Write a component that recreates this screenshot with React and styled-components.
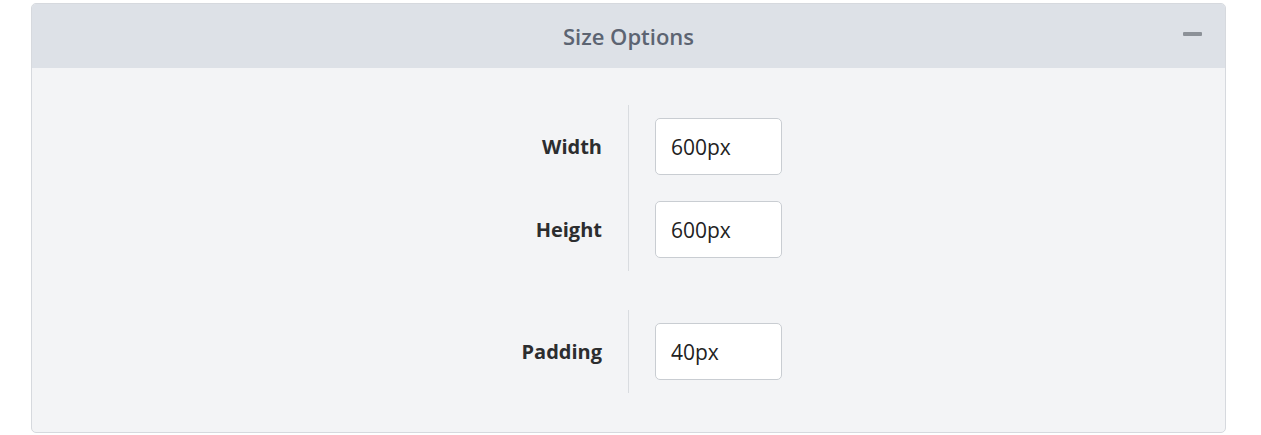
import React from 'react';
import styled, { createGlobalStyle } from 'styled-components';

const GlobalStyle = createGlobalStyle`
    body {
        margin: 0;
        background: #ffffff;
        font-family: "Open Sans", "Liberation Sans", sans-serif;
    }
`;

const Panel = styled.section`
    margin: 3px 0 0 31px;
    width: 1195px;
    box-sizing: border-box;
    border: 1px solid #d6d9de;
    border-radius: 5px;
    background: #f3f4f6;
    overflow: hidden;
`;

const Header = styled.header`
    position: relative;
    height: 64px;
    display: flex;
    align-items: center;
    justify-content: center;
    background: #dde1e7;
    h2 {
        margin: 0;
        font-size: 22px;
        font-weight: 600;
        color: #5c6472;
    }
`;

const Collapse = styled.button`
    position: absolute;
    right: 23px;
    top: 28px;
    width: 19px;
    height: 4px;
    padding: 0;
    border: 0;
    border-radius: 1px;
    background: #8c9198;
`;

const Body = styled.div`
    display: flex;
    flex-direction: column;
    gap: 39px;
    padding: 37px 0 39px;
`;

const Group = styled.div`
    display: flex;
`;

const Column = styled.div`
    flex: 1;
    display: flex;
    flex-direction: column;
    gap: 26px;
    padding: 13px 0;
    ${({ $fields }) => $fields
        ? 'border-left: 1px solid #d9dce0; padding-left: 26px; align-items: flex-start;'
        : 'padding-right: 26px; align-items: flex-end;'}
`;

const Label = styled.label`
    height: 57px;
    display: flex;
    align-items: center;
    font-size: 20px;
    font-weight: 700;
    color: #2c2d2f;
`;

const Input = styled.input`
    width: 127px;
    height: 57px;
    box-sizing: border-box;
    padding: 0 15px;
    border: 1px solid #c9cdd2;
    border-radius: 5px;
    background: #ffffff;
    font-family: inherit;
    font-size: 21px;
    color: #222;
    outline: none;
`;

const groups = [
    [{ label: 'Width', value: '600px' }, { label: 'Height', value: '600px' }],
    [{ label: 'Padding', value: '40px' }],
];

export default function App() {
    return (
        <>
            <GlobalStyle />
            <Panel>
                <Header>
                    <h2>Size Options</h2>
                    <Collapse aria-label="Collapse" />
                </Header>
                <Body>
                    {groups.map((fields, i) => (
                        <Group key={i}>
                            <Column>
                                {fields.map(f => <Label key={f.label}>{f.label}</Label>)}
                            </Column>
                            <Column $fields>
                                {fields.map(f => <Input key={f.label} defaultValue={f.value} />)}
                            </Column>
                        </Group>
                    ))}
                </Body>
            </Panel>
        </>
    );
}
